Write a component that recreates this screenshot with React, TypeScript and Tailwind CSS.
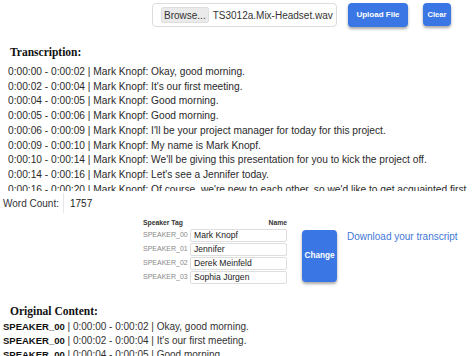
export default function App() {
  const lines = [
    "0:00:00 - 0:00:02 | Mark Knopf: Okay, good morning.",
    "0:00:02 - 0:00:04 | Mark Knopf: It's our first meeting.",
    "0:00:04 - 0:00:05 | Mark Knopf: Good morning.",
    "0:00:05 - 0:00:06 | Mark Knopf: Good morning.",
    "0:00:06 - 0:00:09 | Mark Knopf: I'll be your project manager for today for this project.",
    "0:00:09 - 0:00:10 | Mark Knopf: My name is Mark Knopf.",
    "0:00:10 - 0:00:14 | Mark Knopf: We'll be giving this presentation for you to kick the project off.",
    "0:00:14 - 0:00:16 | Mark Knopf: Let's see a Jennifer today.",
    "0:00:16 - 0:00:20 | Mark Knopf: Of course, we're new to each other, so we'd like to get acquainted first.",
  ];
  const speakers = [
    ["SPEAKER_00", "Mark Knopf"],
    ["SPEAKER_01", "Jennifer"],
    ["SPEAKER_02", "Derek Meinfeld"],
    ["SPEAKER_03", "Sophia Jürgen"],
  ];
  const original = [
    ["0:00:00 - 0:00:02", "Okay, good morning."],
    ["0:00:02 - 0:00:04", "It's our first meeting."],
    ["0:00:04 - 0:00:05", "Good morning."],
  ];
  return (
    <div className="h-[356px] w-[474px] overflow-hidden bg-white text-[#2a2a2a] font-['Liberation_Sans',Arial,sans-serif]">
      {/* top bar */}
      <div className="flex items-start justify-end pr-[23px] pt-[3px]">
        <div className="flex h-[24px] w-[185px] items-center rounded-[4px] border border-[#dcdcdc] pl-[8px]">
          <div className="flex h-[16px] items-center rounded-[2px] border border-[#dedede] bg-[#eaeaea] px-[2px] text-[10px] text-[#333]">
            Browse...
          </div>
          <span className="ml-[4px] text-[10px] text-[#333]">TS3012a.Mix-Headset.wav</span>
        </div>
        <button className="ml-[11px] flex h-[24px] w-[60px] items-center justify-center rounded-[4px] bg-[#3a76e4] text-[8px] font-bold text-white shadow-[0_2px_3px_rgba(0,0,0,0.35)]">
          Upload File
        </button>
        <button className="ml-[15px] flex h-[23px] w-[28px] items-center justify-center rounded-[4px] bg-[#3a76e4] text-[7.6px] font-bold text-white shadow-[0_2px_3px_rgba(0,0,0,0.35)]">
          Clear
        </button>
      </div>

      {/* Transcription */}
      <div className="mt-[17px] pl-[10px] font-['Liberation_Serif',serif] text-[11.5px] font-bold leading-[16px] text-[#111]">
        Transcription:
      </div>
      <div className="mt-[5px] h-[126px] overflow-hidden pl-[8px]">
        {lines.map((l, i) => (
          <div key={i} className="whitespace-nowrap text-[10.2px] leading-[14.7px]">
            {l}
          </div>
        ))}
      </div>

      {/* Word count */}
      <div className="mt-[2px] flex h-[20px] items-center pl-[3px] text-[10px]">
        <span className="text-[#333]">Word Count:</span>
        <div className="ml-[4px] flex h-[20px] w-[100px] items-center border-l border-[#e6e6e6] pl-[6px] text-[#222]">
          1757
        </div>
      </div>

      {/* Speakers */}
      <div className="mt-[5px] flex items-start pl-[143px]">
        <div className="flex w-[144px] flex-col gap-[1px]">
          <div className="flex h-[10px] items-center justify-between text-[6.8px] font-bold leading-[10px] text-[#333]">
            <span>Speaker Tag</span>
            <span>Name</span>
          </div>
          {speakers.map(([tag, name]) => (
            <div key={tag} className="flex h-[13px] items-center">
              <span className="w-[47px] text-[7px] text-[#888]">{tag}</span>
              <div className="flex h-[13px] flex-1 items-center rounded-[2px] border border-[#dedede] pl-[3px] text-[8.6px] text-[#222]">
                {name}
              </div>
            </div>
          ))}
        </div>
        <button className="ml-[15px] mt-[12px] flex h-[52px] w-[35px] items-center justify-center rounded-[4px] bg-[#3a76e4] text-[8.2px] font-bold text-white shadow-[0_2px_3px_rgba(0,0,0,0.35)]">
          Change
        </button>
        <span className="ml-[10px] mt-[13px] text-[10px] leading-[12px] text-[#3f77d6]">
          Download your transcript
        </span>
      </div>

      {/* Original Content */}
      <div className="mt-[19px] pl-[10px] font-['Liberation_Serif',serif] text-[11.5px] font-bold leading-[16px] text-[#111]">
        Original Content:
      </div>
      <div className="mt-[1px] pl-[3px]">
        {original.map(([t, txt], i) => (
          <div key={i} className="whitespace-nowrap text-[10px] leading-[14px]">
            <span className="text-[9.5px] font-bold text-[#111]">SPEAKER_00</span>
            <span className="text-[#333]"> | {t} | {txt}</span>
          </div>
        ))}
      </div>
    </div>
  );
}
